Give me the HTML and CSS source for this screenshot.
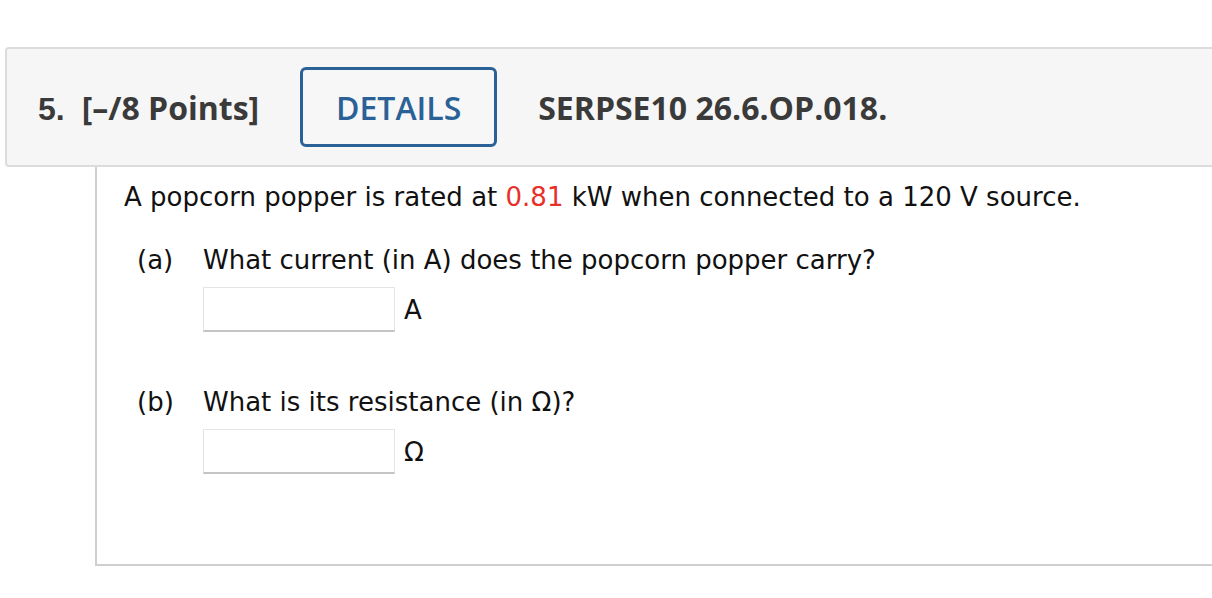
FILE: index.html
```html
<!DOCTYPE html>
<html>
<head>
<meta charset="utf-8">
<link rel="stylesheet" href="styles.css">
</head>
<body>
<div class="page">
  <div class="qhead">
    <span class="qlabel"><span class="qnum">5.</span><span class="qpts">[–/8 Points]</span></span>
    <button class="details">DETAILS</button>
    <span class="qid">SERPSE10 26.6.OP.018.</span>
  </div>
  <div class="qbody">
    <p class="stem">A popcorn popper is rated at <span class="red">0.81</span> kW when connected to a 120 V source.</p>
    <div class="part">
      <div class="pq"><span class="plabel">(a)</span><span>What current (in A) does the popcorn popper carry?</span></div>
      <div class="ans"><input class="box" type="text"><span class="unit">A</span></div>
    </div>
    <div class="part partb">
      <div class="pq"><span class="plabel">(b)</span><span>What is its resistance (in Ω)?</span></div>
      <div class="ans"><input class="box" type="text"><span class="unit">Ω</span></div>
    </div>
  </div>
</div>
</body>
</html>
```
FILE: styles.css
```css
html, body {
  margin: 0;
  padding: 0;
  background: #fff;
  overflow: hidden;
}
.page {
  padding-top: 47px;
  width: 1260px;
}
.qhead {
  margin-left: 5px;
  height: 116px;
  background: #f6f6f6;
  border: 2px solid #dcdcdc;
  border-radius: 4px;
  display: flex;
  align-items: center;
  font-family: "Open Sans", sans-serif;
  color: #3a3a3a;
  font-weight: 700;
  font-size: 32px;
}
.qlabel {
  display: flex;
  align-items: baseline;
}
.qnum {
  font-family: "Liberation Sans", Arial, sans-serif;
  font-weight: 700;
  margin-left: 31px;
  font-size: 32px;
}
.qpts {
  margin-left: 17px;
}
.details {
  margin-left: 41px;
  width: 197px;
  height: 80px;
  border: 3px solid #2a6297;
  border-radius: 6px;
  background: #f7f7f7;
  color: #2a6297;
  font-family: "Open Sans", sans-serif;
  font-weight: 600;
  font-size: 32px;
  padding: 0;
}
.qid {
  margin-left: 41px;
}
.qbody {
  margin-left: 95px;
  height: 399px;
  border-left: 2px solid #cfcfcf;
  border-bottom: 2px solid #cfcfcf;
  font-family: "DejaVu Sans", Verdana, sans-serif;
  font-size: 26px;
  line-height: 30px;
  color: #111;
  padding-left: 27px;
  box-sizing: border-box;
}
.stem {
  margin: 0;
  padding-top: 15px;
}
.red { color: #e8302a; }
.part { margin-top: 33px; }
.partb { margin-top: 55px; }
.pq { display: flex; }
.plabel {
  margin-left: 13px;
  width: 66px;
}
.ans {
  display: flex;
  align-items: center;
  margin-left: 79px;
  margin-top: 12px;
}
.box {
  width: 192px;
  height: 45px;
  box-sizing: border-box;
  border: 1px solid #e4e4e4;
  border-bottom: 2px solid #c4c4c4;
  background: #fff;
  margin: 0;
}
.unit { margin-left: 9px; }
```
